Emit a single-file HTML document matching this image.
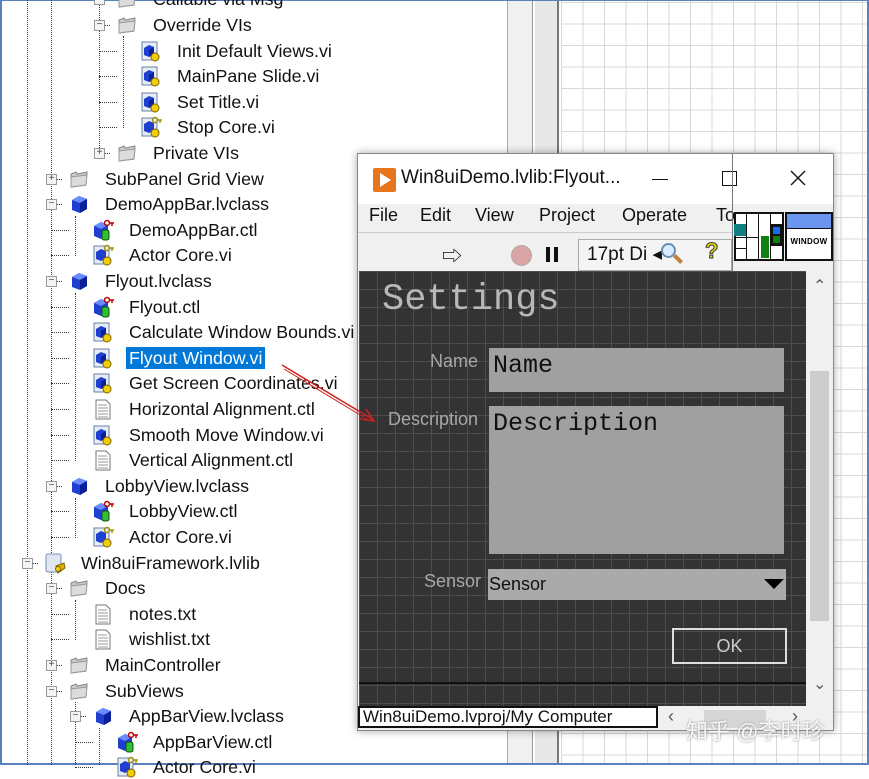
<!DOCTYPE html>
<html><head><meta charset="utf-8"><style>
*{margin:0;padding:0;box-sizing:border-box}
body{width:869px;height:765px;overflow:hidden;background:#fff;position:relative;font-family:"Liberation Sans","Noto Sans CJK SC",sans-serif}
.abs{position:absolute}
.r{position:absolute;height:24px;width:400px}
.r .t{position:absolute;left:81px;top:1px;font-size:17.8px;line-height:22px;color:#111;white-space:nowrap}
.r svg{position:absolute;left:44px;top:1px;width:22px;height:22px}
.r .h{position:absolute;left:3px;top:12px;width:18px;border-top:1px dotted #333}
.r .e{position:absolute;left:22px;top:7px;width:11px;height:11px;border:1px solid #999;background:#f4f4f4;font-size:10px;line-height:8px;text-align:center;color:#445}
.r .e + .h2{position:absolute;left:33px;top:12px;width:5px;border-top:1px dotted #333}
.vl{position:absolute;border-left:1px dotted #333;width:0}
.sel{background:#0078d7;color:#fff !important;padding:0 3px;margin-left:-3px}
.m{position:absolute;top:51px;font-size:18px;color:#111}
.lb{position:absolute;font-size:18px;color:#a8a8a8;text-align:right}
</style></head><body>
<svg width="0" height="0" style="position:absolute">
<defs>
<symbol id="folder" viewBox="0 0 22 22"><path d="M3 6 L8 4 L9 6 L19 4 L18 17 L3 19 Z" fill="#c8c8c8" stroke="#888"/><path d="M3 9 L19 7 L18 17 L3 19Z" fill="#dcdcdc" stroke="#999"/></symbol>
<symbol id="cls" viewBox="0 0 22 22"><path d="M4 7 L11 3 L19 6 L19 16 L12 20 L4 17Z" fill="#1f3fd0"/><path d="M4 7 L11 3 L19 6 L12 10Z" fill="#6a8cff"/><path d="M12 10 L19 6 L19 16 L12 20Z" fill="#0a1f9a"/></symbol>
<symbol id="vi" viewBox="0 0 22 22"><rect x="2" y="2" width="15" height="18" fill="#e6ecf6" stroke="#6b7fa8"/><path d="M4 8 L9 5 L14 7 L14 14 L9 17 L4 15Z" fill="#1f3fd0"/><path d="M9 10 L14 7 L14 14 L9 17Z" fill="#0a1f9a"/><circle cx="15" cy="17" r="4" fill="#f0d000" stroke="#806000"/></symbol>
<symbol id="vik" viewBox="0 0 22 22"><rect x="2" y="2" width="15" height="18" fill="#e6ecf6" stroke="#6b7fa8"/><path d="M4 8 L9 5 L14 7 L14 14 L9 17 L4 15Z" fill="#1f3fd0"/><circle cx="15" cy="17" r="4" fill="#f0d000" stroke="#806000"/><circle cx="15" cy="4" r="2.5" fill="none" stroke="#a09000" stroke-width="1.5"/><path d="M17 4 H22 M20 4 V7" stroke="#a09000" stroke-width="1.5"/></symbol>
<symbol id="ctl" viewBox="0 0 22 22"><path d="M2 7 L9 3 L16 6 L16 16 L9 20 L2 17Z" fill="#1f3fd0"/><path d="M2 7 L9 3 L16 6 L9 10Z" fill="#6a8cff"/><rect x="10" y="11" width="7" height="10" rx="2" fill="#30c030" stroke="#105010"/><circle cx="15" cy="4" r="2.5" fill="none" stroke="#c00000" stroke-width="1.5"/><path d="M17 4 H22 M20 4 V7" stroke="#c00000" stroke-width="1.5"/></symbol>
<symbol id="txt" viewBox="0 0 22 22"><path d="M4 2 H14 L18 6 V21 H4Z" fill="#fff" stroke="#777"/><path d="M6 7 H15 M6 10 H16 M6 13 H16 M6 16 H16 M6 19 H16" stroke="#999"/></symbol>
<symbol id="lib" viewBox="0 0 22 22"><rect x="2" y="2" width="15" height="18" rx="2" fill="#dfe6f2" stroke="#7a8fb8"/><path d="M12 14 L20 11 L21 16 L14 21Z" fill="#e0b000" stroke="#806000"/><circle cx="14" cy="17" r="2.5" fill="#f0d000" stroke="#806000"/></symbol>
</defs></svg>

<div class="abs" style="left:507px;top:0;width:26px;height:765px;background:#f0f0f0;border-left:1px solid #aaa;border-right:1px solid #999"></div>
<div class="abs" style="left:535px;top:0;width:24px;height:765px;background:#e8e8e8;border-right:2px solid #777"></div>
<div class="abs" style="left:561px;top:0;width:308px;height:765px;background-color:#fff;background-image:linear-gradient(#d8d8d8 1px,transparent 1px),linear-gradient(90deg,#d8d8d8 1px,transparent 1px);background-size:21.5px 21.5px;background-position:0 2px"></div>
<div class="abs" style="left:0;top:0;width:869px;height:765px;border:2px solid #5a80bf;border-top-width:1px"></div>

<div class="vl" style="left:27px;top:0;height:765px"></div>
<div class="vl" style="left:51px;top:0;height:765px"></div>
<div class="vl" style="left:75px;top:216px;height:40px"></div>
<div class="vl" style="left:75px;top:293px;height:168px"></div>
<div class="vl" style="left:75px;top:498px;height:40px"></div>
<div class="vl" style="left:75px;top:600px;height:40px"></div>
<div class="vl" style="left:75px;top:702px;height:63px"></div>
<div class="vl" style="left:99px;top:0;height:148px"></div>
<div class="vl" style="left:99px;top:728px;height:37px"></div>
<div class="vl" style="left:123px;top:36px;height:92px"></div>

<div class="r" style="left:72px;top:-13px"><span class="e">+</span><svg><use href="#folder"/></svg><span class="t">Callable via Msg</span></div>
<div class="r" style="left:72px;top:13px"><span class="e">−</span><span class="h2"></span><svg><use href="#folder"/></svg><span class="t">Override VIs</span></div>
<div class="r" style="left:96px;top:38.6px"><span class="h"></span><svg><use href="#vi"/></svg><span class="t">Init Default Views.vi</span></div>
<div class="r" style="left:96px;top:64.2px"><span class="h"></span><svg><use href="#vi"/></svg><span class="t">MainPane Slide.vi</span></div>
<div class="r" style="left:96px;top:89.8px"><span class="h"></span><svg><use href="#vi"/></svg><span class="t">Set Title.vi</span></div>
<div class="r" style="left:96px;top:115.4px"><span class="h"></span><svg><use href="#vik"/></svg><span class="t">Stop Core.vi</span></div>
<div class="r" style="left:72px;top:141px"><span class="e">+</span><span class="h2"></span><svg><use href="#folder"/></svg><span class="t">Private VIs</span></div>
<div class="r" style="left:24px;top:166.6px"><span class="e">+</span><span class="h2"></span><svg><use href="#folder"/></svg><span class="t">SubPanel Grid View</span></div>
<div class="r" style="left:24px;top:192.2px"><span class="e">−</span><span class="h2"></span><svg><use href="#cls"/></svg><span class="t">DemoAppBar.lvclass</span></div>
<div class="r" style="left:48px;top:217.8px"><span class="h"></span><svg><use href="#ctl"/></svg><span class="t">DemoAppBar.ctl</span></div>
<div class="r" style="left:48px;top:243.4px"><span class="h"></span><svg><use href="#vik"/></svg><span class="t">Actor Core.vi</span></div>
<div class="r" style="left:24px;top:269px"><span class="e">−</span><span class="h2"></span><svg><use href="#cls"/></svg><span class="t">Flyout.lvclass</span></div>
<div class="r" style="left:48px;top:294.6px"><span class="h"></span><svg><use href="#ctl"/></svg><span class="t">Flyout.ctl</span></div>
<div class="r" style="left:48px;top:320.2px"><span class="h"></span><svg><use href="#vi"/></svg><span class="t">Calculate Window Bounds.vi</span></div>
<div class="r" style="left:48px;top:345.8px"><span class="h"></span><svg><use href="#vi"/></svg><span class="t sel">Flyout Window.vi</span></div>
<div class="r" style="left:48px;top:371.4px"><span class="h"></span><svg><use href="#vi"/></svg><span class="t">Get Screen Coordinates.vi</span></div>
<div class="r" style="left:48px;top:397px"><span class="h"></span><svg><use href="#txt"/></svg><span class="t">Horizontal Alignment.ctl</span></div>
<div class="r" style="left:48px;top:422.6px"><span class="h"></span><svg><use href="#vi"/></svg><span class="t">Smooth Move Window.vi</span></div>
<div class="r" style="left:48px;top:448.2px"><span class="h"></span><svg><use href="#txt"/></svg><span class="t">Vertical Alignment.ctl</span></div>
<div class="r" style="left:24px;top:473.8px"><span class="e">−</span><span class="h2"></span><svg><use href="#cls"/></svg><span class="t">LobbyView.lvclass</span></div>
<div class="r" style="left:48px;top:499.4px"><span class="h"></span><svg><use href="#ctl"/></svg><span class="t">LobbyView.ctl</span></div>
<div class="r" style="left:48px;top:525px"><span class="h"></span><svg><use href="#vik"/></svg><span class="t">Actor Core.vi</span></div>
<div class="r" style="left:0;top:550.6px"><span class="e">−</span><span class="h2"></span><svg><use href="#lib"/></svg><span class="t">Win8uiFramework.lvlib</span></div>
<div class="r" style="left:24px;top:576.2px"><span class="e">−</span><span class="h2"></span><svg><use href="#folder"/></svg><span class="t">Docs</span></div>
<div class="r" style="left:48px;top:601.8px"><span class="h"></span><svg><use href="#txt"/></svg><span class="t">notes.txt</span></div>
<div class="r" style="left:48px;top:627.4px"><span class="h"></span><svg><use href="#txt"/></svg><span class="t">wishlist.txt</span></div>
<div class="r" style="left:24px;top:653px"><span class="e">+</span><span class="h2"></span><svg><use href="#folder"/></svg><span class="t">MainController</span></div>
<div class="r" style="left:24px;top:678.6px"><span class="e">−</span><span class="h2"></span><svg><use href="#folder"/></svg><span class="t">SubViews</span></div>
<div class="r" style="left:48px;top:704.2px"><span class="e">−</span><span class="h2"></span><svg><use href="#cls"/></svg><span class="t">AppBarView.lvclass</span></div>
<div class="r" style="left:72px;top:729.8px"><span class="h"></span><svg><use href="#ctl"/></svg><span class="t">AppBarView.ctl</span></div>
<div class="r" style="left:72px;top:755.4px"><span class="h"></span><svg><use href="#vik"/></svg><span class="t">Actor Core.vi</span></div>

<div class="abs" style="left:357px;top:153px;width:477px;height:578px;background:#f0f0f0;border:1px solid #888;box-shadow:0 0 8px rgba(0,0,0,.35)">
 <div class="abs" style="left:0;top:0;width:475px;height:50px;background:#fff"></div>
 <div class="abs" style="left:15px;top:14px;width:23px;height:24px;background:#e8741c;border-radius:2px"></div>
 <div class="abs" style="left:22px;top:19px;width:0;height:0;border-left:11px solid #fff;border-top:7px solid transparent;border-bottom:7px solid transparent"></div>
 <div class="abs" style="left:43px;top:13px;font-size:19px;color:#111;white-space:nowrap">Win8uiDemo.lvlib:Flyout...</div>
 <div class="abs" style="left:294px;top:25px;width:16px;border-top:1.5px solid #111"></div>
 <div class="abs" style="left:364px;top:17px;width:15px;height:15px;border:1.5px solid #111"></div>
 <svg class="abs" style="left:432px;top:16px" width="16" height="16"><path d="M1 1 L15 15 M15 1 L1 15" stroke="#111" stroke-width="1.4"/></svg>
 <div class="m" style="left:11px">File</div>
 <div class="m" style="left:62px">Edit</div>
 <div class="m" style="left:117px">View</div>
 <div class="m" style="left:181px">Project</div>
 <div class="m" style="left:264px">Operate</div>
 <div class="m" style="left:358px">To</div>
 <div class="abs" style="left:0;top:78px;width:374px;border-top:1px solid #ccc"></div>
 <div class="abs" style="left:374px;top:0;height:118px;border-left:1px solid #777"></div>
 <div class="abs" style="left:84px;top:86px;font-size:20px;color:#111">⇨</div>
 <div class="abs" style="left:153px;top:91px;width:21px;height:21px;border-radius:50%;background:#dba4a4;border:1px solid #aaa"></div>
 <div class="abs" style="left:188px;top:93px;width:4px;height:15px;background:#111"></div>
 <div class="abs" style="left:196px;top:93px;width:4px;height:15px;background:#111"></div>
 <div class="abs" style="left:220px;top:85px;width:154px;height:32px;border:1px solid #aaa;background:#f4f4f4;font-size:19px;line-height:30px;padding-left:8px;color:#111">17pt Di ◂</div>
 <div class="abs" style="left:303px;top:89px;width:15px;height:15px;border-radius:50%;border:2px solid #6a8cb0;background:#d8ecff"></div>
 <div class="abs" style="left:315px;top:103px;width:10px;border-top:4px solid #c08040;transform:rotate(45deg)"></div>
 <div class="abs" style="left:347px;top:84px;font-size:22px;font-weight:bold;color:#e8e000;-webkit-text-stroke:1px #333">?</div>
 <div class="abs" style="left:376px;top:58px;width:50px;height:49px;border:2px solid #111;background:#fff"></div>
 <div class="abs" style="left:376px;top:58px;width:50px;height:49px">
  <div class="abs" style="left:12px;top:0;height:49px;border-left:1.5px solid #111"></div>
  <div class="abs" style="left:24px;top:0;height:49px;border-left:1.5px solid #111"></div>
  <div class="abs" style="left:36px;top:0;height:49px;border-left:1.5px solid #111"></div>
  <div class="abs" style="left:0;top:12px;width:12px;height:12px;background:#108080"></div>
  <div class="abs" style="left:0;top:36px;width:12px;border-top:1.5px solid #111"></div>
  <div class="abs" style="left:0;top:25px;width:24px;border-top:1.5px solid #111"></div>
  <div class="abs" style="left:27px;top:24px;width:8px;height:22px;background:#108010"></div>
  <div class="abs" style="left:36px;top:12px;width:13px;height:22px;background:#111"></div>
  <div class="abs" style="left:39px;top:15px;width:7px;height:7px;background:#1a6cf0"></div>
  <div class="abs" style="left:39px;top:24px;width:7px;height:7px;background:#108010"></div>
 </div>
 <div class="abs" style="left:427px;top:58px;width:48px;height:49px;border:2px solid #111;background:#fff"><div style="height:15px;background:#6b96f0;border-bottom:1.5px solid #111"></div><div style="font-size:8px;font-weight:bold;text-align:center;margin-top:8px;letter-spacing:.3px">WINDOW</div></div>
 <div class="abs" style="left:1px;top:117px;width:447px;height:435px;background-color:#333;background-image:linear-gradient(#4d4d4d 1px,transparent 1px),linear-gradient(90deg,#4d4d4d 1px,transparent 1px);background-size:18px 18px"></div>
 <div class="abs" style="left:1px;top:528px;width:447px;border-top:2px solid #111"></div>
 <div class="abs" style="left:24px;top:125px;font-family:'Liberation Mono',monospace;font-size:37px;color:#b8b8b8">Settings</div>
 <div class="lb" style="left:10px;top:197px;width:110px">Name</div>
 <div class="abs" style="left:131px;top:194px;width:295px;height:44px;background:#a0a0a0;font-family:'Liberation Mono',monospace;font-size:25px;color:#111;padding:3px 4px">Name</div>
 <div class="lb" style="left:0;top:255px;width:120px">Description</div>
 <div class="abs" style="left:131px;top:252px;width:295px;height:148px;background:#a0a0a0;font-family:'Liberation Mono',monospace;font-size:25px;color:#111;padding:3px 4px">Description</div>
 <div class="lb" style="left:10px;top:417px;width:113px">Sensor</div>
 <div class="abs" style="left:130px;top:415px;width:298px;height:31px;background:#aaa;font-size:18px;line-height:31px;color:#111;padding-left:1px">Sensor</div>
 <div class="abs" style="left:406px;top:425px;width:0;height:0;border-top:10px solid #000;border-left:10px solid transparent;border-right:10px solid transparent"></div>
 <div class="abs" style="left:314px;top:474px;width:115px;height:36px;border:2px solid #ddd;color:#ccc;font-size:18px;line-height:32px;text-align:center">OK</div>
 <div class="abs" style="left:452px;top:217px;width:19px;height:250px;background:#cdcdcd"></div>
 <div class="abs" style="left:455px;top:122px;font-size:16px;color:#555">⌃</div>
 <div class="abs" style="left:455px;top:520px;font-size:16px;color:#555">⌄</div>
 <div class="abs" style="left:0;top:552px;width:300px;height:22px;background:#fff;border:2px solid #111;font-size:17px;line-height:18px;padding-left:3px;color:#111;white-space:nowrap">Win8uiDemo.lvproj/My Computer</div>
 <div class="abs" style="left:310px;top:552px;font-size:18px;color:#555">‹</div>
 <div class="abs" style="left:346px;top:556px;width:62px;height:18px;background:#d6d6d6"></div>
 <div class="abs" style="left:434px;top:552px;font-size:18px;color:#555">›</div>
</div>
<svg class="abs" style="left:270px;top:355px" width="120" height="80"><path d="M12 10 L102 64 M96 54 L104 66 L90 64" stroke="#d02020" stroke-width="1.5" fill="none"/><path d="M14 14 L100 66" stroke="#d02020" stroke-width="1"/></svg>
<div class="abs" style="left:686px;top:714px;font-size:22px;color:rgba(255,255,255,.9);text-shadow:0 0 2px #888;white-space:nowrap">知乎 @李时珍</div>
</body></html>
